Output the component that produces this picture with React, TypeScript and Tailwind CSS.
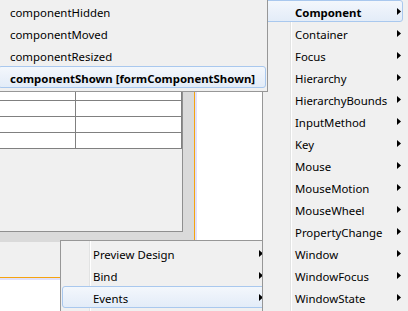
import React from "react";

type Item = { text: string; active?: boolean; bold?: boolean; arrow?: boolean };

const popupItems: Item[] = [
  { text: "componentHidden" },
  { text: "componentMoved" },
  { text: "componentResized" },
  { text: "componentShown [formComponentShown]", active: true, bold: true },
];

const contextItems: Item[] = [
  { text: "Preview Design" },
  { text: "Bind" },
  { text: "Events", active: true },
];

const submenuItems: Item[] = [
  { text: "Component", active: true, bold: true },
  { text: "Container" },
  { text: "Focus" },
  { text: "Hierarchy" },
  { text: "HierarchyBounds" },
  { text: "InputMethod" },
  { text: "Key" },
  { text: "Mouse" },
  { text: "MouseMotion" },
  { text: "MouseWheel" },
  { text: "PropertyChange" },
  { text: "Window" },
  { text: "WindowFocus" },
  { text: "WindowState" },
];

const Arrow = () => (
  <svg width="4" height="7" viewBox="0 0 4 7" className="shrink-0">
    <path d="M0 0 L4 3.5 L0 7 Z" fill="#000" />
  </svg>
);

// win7 style hover box
const hl =
  "border-[#a9c8ee] rounded-[3px] bg-gradient-to-b from-[#f3f7fc] to-[#e3ecf8]";

const MenuRow = ({
  it,
  width,
  pad,
  arrow = true,
}: {
  it: Item;
  width: string;
  pad: string;
  arrow?: boolean;
}) => (
  <div
    className={`ml-[1px] ${width} h-[22px] flex items-center justify-between ${pad} pr-[1px] border whitespace-nowrap ${
      it.active ? hl : "border-transparent"
    }`}
  >
    <span className={`pt-[4px] leading-[16px] ${it.bold ? "font-bold" : ""}`}>{it.text}</span>
    {arrow && <Arrow />}
  </div>
);

const App = () => {
  const rows = Array.from({ length: 9 });
  return (
    <div className="relative w-[408px] h-[311px] overflow-hidden bg-white font-['Noto_Sans',sans-serif] text-[11.4px] text-black">
      {/* form designer canvas */}
      <div className="w-[197px] h-[280px] border-r-2 border-b-2 border-[#e0e0fa]">
        <div className="w-[195px] h-[278px] bg-[#f0f0f0] border-r border-b border-[#f5a30f]">
          <div className="w-[194px] h-[242px] bg-[#dadada]">
            <div className="w-[183px] h-[232px] bg-[#f0f0f0] border-r border-b border-[#8f8f8f] pt-[5px]">
              <div className="w-[182px] bg-white border-r border-[#808080]">
                {rows.map((_, i) => (
                  <div key={i} className="flex h-[16px] border-b border-[#808080]">
                    <div className="w-[76px] border-r border-[#808080]" />
                    <div className="flex-1" />
                  </div>
                ))}
              </div>
            </div>
          </div>
        </div>
      </div>

      {/* context menu */}
      <div className="absolute left-[60px] top-[240px] w-[207px] h-[90px] bg-[#f0f0f0] border border-[#979797] pt-[1px]">
        <div className="absolute left-[28px] top-0 bottom-0 w-[2px] border-l border-[#e2e3e3] bg-white" />
        <div className="relative flex flex-col">
          {contextItems.map((it) => (
            <MenuRow key={it.text} it={it} width="w-[203px]" pad="pl-[30px]" />
          ))}
        </div>
      </div>

      {/* event type submenu */}
      <div className="absolute left-[262px] top-[-4px] w-[150px] h-[330px] bg-[#f0f0f0] border border-[#979797] pt-[3px]">
        <div className="absolute left-[27px] top-0 bottom-0 w-[2px] border-l border-[#e2e3e3] bg-white" />
        <div className="relative flex flex-col">
          {submenuItems.map((it) => (
            <MenuRow key={it.text} it={it} width="w-[139px]" pad="pl-[30px]" />
          ))}
        </div>
      </div>

      {/* listener popup */}
      <div className="absolute left-[-4px] top-[-4px] w-[272px] bg-[#f0f0f0] border border-[#979797] pt-[3px] pb-[3px] flex flex-col">
        {popupItems.map((it) => (
          <MenuRow key={it.text} it={it} width="w-[268px]" pad="pl-[11px]" arrow={false} />
        ))}
      </div>
    </div>
  );
};

export default App;
